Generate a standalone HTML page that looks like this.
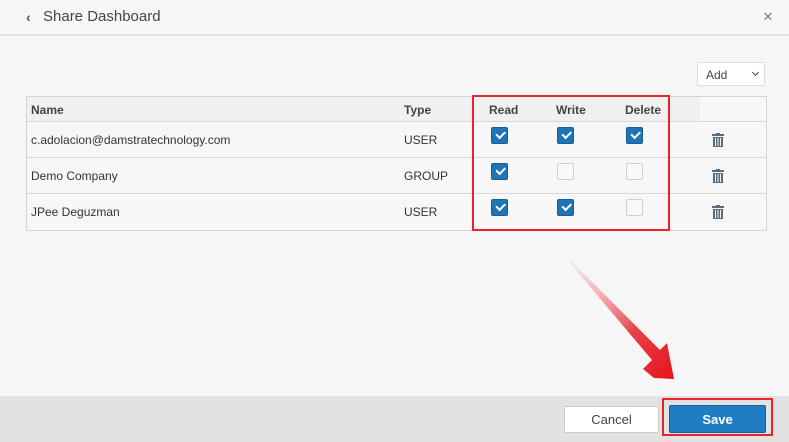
<!DOCTYPE html>
<html><head><style>
body{margin:0;width:789px;height:442px;background:#f6f6f6;font-family:"Liberation Sans",sans-serif;position:relative;overflow:hidden;color:#333}
.a{position:absolute}
.hdr{left:0;top:0;width:789px;height:34px;border-bottom:2px solid #e0e0e0;background:#f7f7f7}
.t{font-size:15px;color:#444}
.tbl{left:26px;top:96px;width:739px;height:133px;border:1px solid #d4d4d4;background:#f7f7f7}
.row{position:absolute;left:0;width:739px;border-top:1px solid #d8d8d8}
.cell{position:absolute;font-size:12px;color:#333}
.th{font-weight:bold;color:#444}
.cb{position:absolute;width:17px;height:17px;border-radius:2px;box-sizing:border-box}
.on{background:#1f74b5;border:1px solid #155f96}
.off{background:#f8f8f8;border:1px solid #cfcfcf}
.on::after{content:"";position:absolute;left:4px;top:3px;width:7px;height:3.5px;border-left:2px solid #fff;border-bottom:2px solid #fff;transform:rotate(-45deg)}
.foot{left:0;top:396px;width:789px;height:46px;background:#e2e2e2}
.btn{position:absolute;font-size:13px;text-align:center;border-radius:2px;box-sizing:border-box}
</style></head><body>
<div class="a hdr"></div>
<div class="a" style="left:26px;top:9px;font-size:14px;color:#456;font-weight:bold">‹</div>
<div class="a t" style="left:43px;top:8px">Share Dashboard</div>
<div class="a" style="left:763px;top:7px;font-size:17px;color:#777">×</div>
<div class="a" style="left:697px;top:62px;width:68px;height:24px;border:1px solid #ddd;background:#fff;border-radius:2px;box-sizing:border-box;font-size:12px;color:#444"><span style="position:absolute;left:8px;top:5px">Add</span><span style="position:absolute;left:55px;top:7px;width:4px;height:4px;border-right:1.5px solid #444;border-bottom:1.5px solid #444;transform:rotate(45deg)"></span></div>
<div class="a tbl">
 <div class="row" style="top:0;height:24px;border-top:none;background:#f0f0f0;width:673px"></div>
 <div class="cell th" style="left:4px;top:6px">Name</div>
 <div class="cell th" style="left:377px;top:6px">Type</div>
 <div class="cell th" style="left:462px;top:6px">Read</div>
 <div class="cell th" style="left:529px;top:6px">Write</div>
 <div class="cell th" style="left:598px;top:6px">Delete</div>
 <div class="row" style="top:24px"></div>
 <div class="row" style="top:60px"></div>
 <div class="row" style="top:96px"></div>
 <div class="cell" style="left:4px;top:36px">c.adolacion@damstratechnology.com</div>
 <div class="cell" style="left:377px;top:36px">USER</div>
 <div class="cell" style="left:4px;top:72px">Demo Company</div>
 <div class="cell" style="left:377px;top:72px">GROUP</div>
 <div class="cell" style="left:4px;top:108px">JPee Deguzman</div>
 <div class="cell" style="left:377px;top:108px">USER</div>
 <div class="cb on" style="left:464px;top:30px"></div><div class="cb on" style="left:530px;top:30px"></div><div class="cb on" style="left:599px;top:30px"></div>
 <div class="cb on" style="left:464px;top:66px"></div><div class="cb off" style="left:530px;top:66px"></div><div class="cb off" style="left:599px;top:66px"></div>
 <div class="cb on" style="left:464px;top:102px"></div><div class="cb on" style="left:530px;top:102px"></div><div class="cb off" style="left:599px;top:102px"></div>
 <svg class="a" style="left:684px;top:36px" width="14" height="14" viewBox="0 0 14 14"><rect x="1" y="1" width="12" height="2" fill="#5b6c7c"/><rect x="5" y="0" width="4" height="2" fill="#5b6c7c"/><path d="M2 4h10v10H2z" fill="#5b6c7c"/><path d="M4.5 5v8M7 5v8M9.5 5v8" stroke="#f7f7f7" stroke-width="1"/></svg>
 <svg class="a" style="left:684px;top:72px" width="14" height="14" viewBox="0 0 14 14"><rect x="1" y="1" width="12" height="2" fill="#5b6c7c"/><rect x="5" y="0" width="4" height="2" fill="#5b6c7c"/><path d="M2 4h10v10H2z" fill="#5b6c7c"/><path d="M4.5 5v8M7 5v8M9.5 5v8" stroke="#f7f7f7" stroke-width="1"/></svg>
 <svg class="a" style="left:684px;top:108px" width="14" height="14" viewBox="0 0 14 14"><rect x="1" y="1" width="12" height="2" fill="#5b6c7c"/><rect x="5" y="0" width="4" height="2" fill="#5b6c7c"/><path d="M2 4h10v10H2z" fill="#5b6c7c"/><path d="M4.5 5v8M7 5v8M9.5 5v8" stroke="#f7f7f7" stroke-width="1"/></svg>
</div>
<div class="a" style="left:472px;top:95px;width:198px;height:136px;border:2px solid #e8232b;box-sizing:border-box"></div>
<div class="a foot"></div>
<div class="btn" style="left:564px;top:406px;width:95px;height:27px;background:#fff;border:1px solid #ccc;padding-top:5px;color:#444">Cancel</div>
<div class="btn" style="left:669px;top:405px;width:97px;height:28px;background:#1f7dc4;border:1px solid #17609a;color:#fff;font-weight:bold;padding-top:6px">Save</div>
<div class="a" style="left:662px;top:398px;width:111px;height:38px;border:2px solid #e8232b;box-sizing:border-box"></div>
<svg class="a" style="left:0;top:0" width="789" height="442">
<defs><linearGradient id="g" x1="572" y1="262" x2="672" y2="380" gradientUnits="userSpaceOnUse"><stop offset="0" stop-color="#f6d0d2" stop-opacity="0.4"/><stop offset="0.6" stop-color="#e8404a"/><stop offset="1" stop-color="#e8131b"/></linearGradient></defs>
<polygon points="571,261 660,350 667,343 674,379 654,378 643,369 652,360 570,263" fill="url(#g)"/>
</svg>
</body></html>
